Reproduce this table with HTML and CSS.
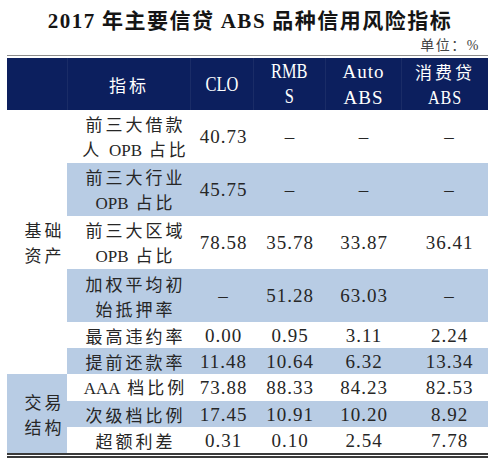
FILE: index.html
```html
<!DOCTYPE html>
<html lang="zh">
<head>
<meta charset="utf-8">
<link rel="stylesheet" href="styles.css">
</head>
<body>
<div class="page">
  <h1 class="title"><span class="lat">2017</span> 年主要信贷 <span class="lat">ABS</span> 品种信用风险指标</h1>
  <div class="unit">单位：<span class="lat">%</span></div>
  <div class="rule"></div>
  <table class="risk">
    <colgroup>
      <col class="c-grp"><col class="c-ind"><col class="c-clo"><col class="c-rmbs"><col class="c-auto"><col class="c-cons">
    </colgroup>
    <thead>
      <tr class="head">
        <th class="h-grp"></th>
        <th class="h-ind">指标</th>
        <th class="h-clo"><span class="narrow">CLO</span></th>
        <th class="h-rmbs"><span class="narrow">RMB<br>S</span></th>
        <th class="h-auto"><span class="mono">Auto<br>ABS</span></th>
        <th class="h-cons">消费贷<br><span class="mono">ABS</span></th>
      </tr>
    </thead>
    <tbody>
      <tr class="tall">
        <td class="grp" rowspan="6">基础<br>资产</td>
        <td class="ind">前三大借款<br>人 <span class="lat caps">OPB</span> 占比</td>
        <td class="num n-clo">40.73</td><td class="num n-rmbs">–</td><td class="num n-auto">–</td><td class="num n-cons">–</td>
      </tr>
      <tr class="tall alt">
        <td class="ind">前三大行业<br><span class="lat caps">OPB</span> 占比</td>
        <td class="num n-clo">45.75</td><td class="num n-rmbs">–</td><td class="num n-auto">–</td><td class="num n-cons">–</td>
      </tr>
      <tr class="tall">
        <td class="ind">前三大区域<br><span class="lat caps">OPB</span> 占比</td>
        <td class="num n-clo">78.58</td><td class="num n-rmbs">35.78</td><td class="num n-auto">33.87</td><td class="num n-cons">36.41</td>
      </tr>
      <tr class="tall alt">
        <td class="ind">加权平均初<br>始抵押率</td>
        <td class="num n-clo">–</td><td class="num n-rmbs">51.28</td><td class="num n-auto">63.03</td><td class="num n-cons">–</td>
      </tr>
      <tr class="short">
        <td class="ind">最高违约率</td>
        <td class="num n-clo">0.00</td><td class="num n-rmbs">0.95</td><td class="num n-auto">3.11</td><td class="num n-cons">2.24</td>
      </tr>
      <tr class="short alt">
        <td class="ind">提前还款率</td>
        <td class="num n-clo">11.48</td><td class="num n-rmbs">10.64</td><td class="num n-auto">6.32</td><td class="num n-cons">13.34</td>
      </tr>
      <tr class="short">
        <td class="grp grp-blue" rowspan="3">交易<br>结构</td>
        <td class="ind"><span class="lat caps">AAA</span> 档比例</td>
        <td class="num n-clo">73.88</td><td class="num n-rmbs">88.33</td><td class="num n-auto">84.23</td><td class="num n-cons">82.53</td>
      </tr>
      <tr class="short alt">
        <td class="ind">次级档比例</td>
        <td class="num n-clo">17.45</td><td class="num n-rmbs">10.91</td><td class="num n-auto">10.20</td><td class="num n-cons">8.92</td>
      </tr>
      <tr class="short">
        <td class="ind">超额利差</td>
        <td class="num n-clo">0.31</td><td class="num n-rmbs">0.10</td><td class="num n-auto">2.54</td><td class="num n-cons">7.78</td>
      </tr>
    </tbody>
  </table>
</div>
</body>
</html>
```

FILE: styles.css
```css
html, body {
  margin: 0;
  padding: 0;
  background: #ffffff;
}

body {
  font-family: "Noto Sans CJK SC", "Liberation Serif", sans-serif;
  color: #262626;
}

.page {
  width: 500px;
}

.lat {
  font-family: "Liberation Serif", "Noto Sans CJK SC", serif;
}

.title {
  margin: 0;
  padding-top: 4px;
  height: 30px;
  line-height: 30px;
  text-align: center;
  font-size: 21px;
  font-weight: bold;
  letter-spacing: 1.5px;
  color: #151515;
  white-space: nowrap;
}

.unit {
  height: 20px;
  line-height: 20px;
  text-align: right;
  padding-right: 20px;
  font-size: 14px;
  letter-spacing: 1.5px;
  color: #444;
}

.rule {
  margin: 1px 12px 0 7px;
  height: 1px;
  background: #8c8c8c;
}

.risk {
  margin: 2px 0 0 7px;
  width: 481px;
  table-layout: fixed;
  border-collapse: separate;
  border-spacing: 0;
  border-bottom: 5px double #3a3a3a;
}

.c-grp { width: 60px; }
.c-ind { width: 123px; }
.c-clo { width: 63px; }
.c-rmbs { width: 72px; }
.c-auto { width: 76px; }
.c-cons { width: 87px; }

.risk th,
.risk td {
  padding: 0;
  text-align: center;
  vertical-align: middle;
  white-space: nowrap;
}

.head th {
  height: 52px;
  background: #0c1f5e;
  color: #ffffff;
  font-weight: normal;
  font-size: 17px;
  line-height: 25px;
  letter-spacing: 3px;
}

.head th + th {
  border-left: 1px solid rgba(255, 255, 255, 0.06);
}

.h-ind { padding-left: 2px; }
.h-clo { padding-right: 5px; }
.h-rmbs { padding-right: 10px; }
.h-auto { padding-right: 12px; }
.h-cons { padding-right: 5px; }

.narrow {
  display: inline-block;
  font-family: "Liberation Serif", serif;
  font-size: 20px;
  letter-spacing: 0;
  transform: scaleX(0.82);
}

.mono {
  font-family: "Liberation Serif", serif;
  font-size: 19px;
  letter-spacing: 1px;
}

.h-cons .mono {
  display: inline-block;
  transform: scaleX(0.85);
}

.tall td { height: 53px; }
.short td { height: 26px; }

.risk td {
  font-size: 17px;
  line-height: 25px;
  letter-spacing: 3px;
  color: #262626;
}

.alt td.ind,
.alt td.num {
  background: #b8cce4;
}

.grp {
  padding-left: 15px !important;
  background: #ffffff;
}

.grp-blue {
  background: #b8cce4;
}

.ind {
  padding-left: 14px !important;
}

.caps {
  letter-spacing: 0;
  font-size: 17px;
}

.num {
  font-family: "Liberation Serif", serif;
  font-size: 19px !important;
  letter-spacing: 1px !important;
  color: #2e2e2e;
}

.n-clo { padding-left: 4px !important; }
.n-rmbs { padding-left: 2px !important; }
.n-auto { padding-left: 2px !important; }
.n-cons { padding-left: 10px !important; }
```
